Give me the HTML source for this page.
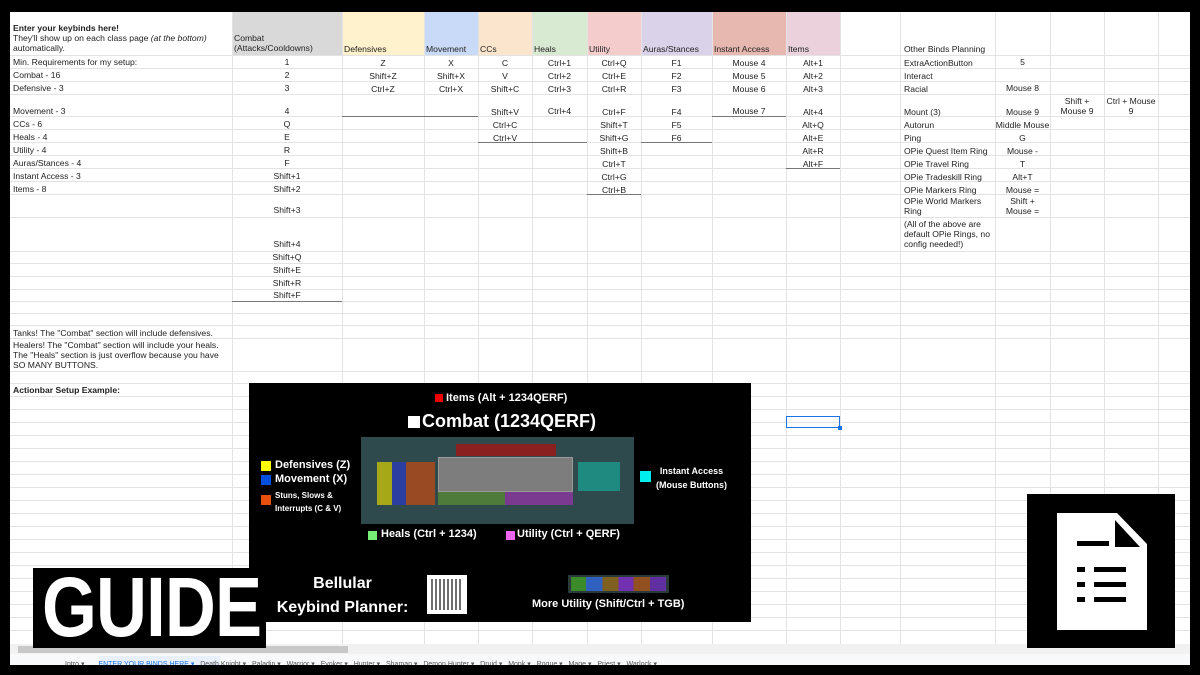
<!DOCTYPE html>
<html><head><meta charset="utf-8">
<style>
*{margin:0;padding:0;box-sizing:border-box}
body{width:1200px;height:675px;background:#000;position:relative;overflow:hidden;font-family:"Liberation Sans",sans-serif;font-size:8.6px;color:#222}
#sheet{position:absolute;left:10px;top:12px;width:1180px;height:653px;background:#fff;overflow:hidden}
.a{position:absolute;white-space:nowrap;line-height:10px}
.c{text-align:center}
.h{position:absolute;left:0;width:1180px;height:1px;background:#e3e3e3}
.v{position:absolute;top:0;width:1px;height:640px;background:#e3e3e3}
.f{position:absolute}
.b{position:absolute;height:1px;background:#777}
.bk{position:absolute;background:#000}
.w{color:#fff;font-weight:bold;position:absolute;white-space:nowrap}
.sq{position:absolute}
</style></head><body>
<div id="sheet">
<div class="f" style="left:222px;top:0;width:110px;height:43px;background:#d9d9d9"></div>
<div class="f" style="left:332px;top:0;width:82px;height:43px;background:#fff2cc"></div>
<div class="f" style="left:414px;top:0;width:54px;height:43px;background:#c9daf8"></div>
<div class="f" style="left:468px;top:0;width:54px;height:43px;background:#fce5cd"></div>
<div class="f" style="left:522px;top:0;width:55px;height:43px;background:#d9ead3"></div>
<div class="f" style="left:577px;top:0;width:54px;height:43px;background:#f4cccc"></div>
<div class="f" style="left:631px;top:0;width:71px;height:43px;background:#d9d2e9"></div>
<div class="f" style="left:702px;top:0;width:74px;height:43px;background:#e6b8af"></div>
<div class="f" style="left:776px;top:0;width:54px;height:43px;background:#ead1dc"></div>
<div class="v" style="left:222px"></div><div class="v" style="left:332px"></div><div class="v" style="left:414px"></div><div class="v" style="left:468px"></div><div class="v" style="left:522px"></div><div class="v" style="left:577px"></div><div class="v" style="left:631px"></div><div class="v" style="left:702px"></div><div class="v" style="left:776px"></div><div class="v" style="left:830px"></div><div class="v" style="left:890px"></div><div class="v" style="left:985px"></div><div class="v" style="left:1040px"></div><div class="v" style="left:1094px"></div><div class="v" style="left:1148px"></div>
<div class="h" style="top:43px"></div><div class="h" style="top:56px"></div><div class="h" style="top:69px"></div><div class="h" style="top:82px"></div><div class="h" style="top:104px"></div><div class="h" style="top:117px"></div><div class="h" style="top:130px"></div><div class="h" style="top:143px"></div><div class="h" style="top:156px"></div><div class="h" style="top:169px"></div><div class="h" style="top:182px"></div><div class="h" style="top:205px"></div><div class="h" style="top:239px"></div><div class="h" style="top:251px"></div><div class="h" style="top:264px"></div><div class="h" style="top:277px"></div><div class="h" style="top:289px"></div><div class="h" style="top:301px"></div><div class="h" style="top:313px"></div><div class="h" style="top:326px"></div><div class="h" style="top:359px"></div><div class="h" style="top:371px"></div><div class="h" style="top:384px"></div><div class="h" style="top:397px"></div><div class="h" style="top:410px"></div><div class="h" style="top:423px"></div><div class="h" style="top:436px"></div><div class="h" style="top:449px"></div><div class="h" style="top:462px"></div><div class="h" style="top:475px"></div><div class="h" style="top:488px"></div><div class="h" style="top:501px"></div><div class="h" style="top:514px"></div><div class="h" style="top:527px"></div><div class="h" style="top:540px"></div><div class="h" style="top:553px"></div><div class="h" style="top:566px"></div><div class="h" style="top:579px"></div><div class="h" style="top:592px"></div><div class="h" style="top:605px"></div><div class="h" style="top:618px"></div>
<div class="b" style="left:332px;top:104px;width:136px"></div>
<div class="b" style="left:468px;top:130px;width:109px"></div>
<div class="b" style="left:702px;top:104px;width:74px"></div>
<div class="b" style="left:631px;top:130px;width:71px"></div>
<div class="b" style="left:776px;top:156px;width:54px"></div>
<div class="b" style="left:577px;top:182px;width:54px"></div>
<div class="b" style="left:222px;top:289px;width:110px"></div>
<div class="f" style="left:776px;top:404px;width:54px;height:12px;border:1px solid #1a73e8"></div>
<div class="f" style="left:828px;top:414px;width:4px;height:4px;background:#1a73e8"></div>

<div class="a" style="left:3px;top:11px"><b>Enter your keybinds here!</b><br>They'll show up on each class page <i>(at the bottom)</i><br>automatically.</div>
<div class="a" style="left:3px;top:45px">Min. Requirements for my setup:</div>
<div class="a" style="left:3px;top:58px">Combat - 16</div>
<div class="a" style="left:3px;top:71px">Defensive - 3</div>
<div class="a" style="left:3px;top:94px">Movement - 3</div>
<div class="a" style="left:3px;top:107px">CCs - 6</div>
<div class="a" style="left:3px;top:120px">Heals - 4</div>
<div class="a" style="left:3px;top:133px">Utility - 4</div>
<div class="a" style="left:3px;top:146px">Auras/Stances - 4</div>
<div class="a" style="left:3px;top:159px">Instant Access - 3</div>
<div class="a" style="left:3px;top:172px">Items - 8</div>
<div class="a" style="left:3px;top:316px">Tanks! The "Combat" section will include defensives.</div>
<div class="a" style="left:3px;top:328px">Healers! The "Combat" section will include your heals.<br>The "Heals" section is just overflow because you have<br>SO MANY BUTTONS.</div>
<div class="a" style="left:3px;top:373px"><b>Actionbar Setup Example:</b></div>
<div class="a" style="left:224px;top:21px">Combat<br>(Attacks/Cooldowns)</div>
<div class="a" style="left:334px;top:32px">Defensives</div>
<div class="a" style="left:416px;top:32px">Movement</div>
<div class="a" style="left:470px;top:32px">CCs</div>
<div class="a" style="left:524px;top:32px">Heals</div>
<div class="a" style="left:579px;top:32px">Utility</div>
<div class="a" style="left:633px;top:32px">Auras/Stances</div>
<div class="a" style="left:704px;top:32px">Instant Access</div>
<div class="a" style="left:778px;top:32px">Items</div>
<div class="a c" style="left:222px;width:110px;top:45px">1</div>
<div class="a c" style="left:222px;width:110px;top:58px">2</div>
<div class="a c" style="left:222px;width:110px;top:71px">3</div>
<div class="a c" style="left:222px;width:110px;top:94px">4</div>
<div class="a c" style="left:222px;width:110px;top:107px">Q</div>
<div class="a c" style="left:222px;width:110px;top:120px">E</div>
<div class="a c" style="left:222px;width:110px;top:133px">R</div>
<div class="a c" style="left:222px;width:110px;top:146px">F</div>
<div class="a c" style="left:222px;width:110px;top:159px">Shift+1</div>
<div class="a c" style="left:222px;width:110px;top:172px">Shift+2</div>
<div class="a c" style="left:222px;width:110px;top:193px">Shift+3</div>
<div class="a c" style="left:222px;width:110px;top:227px">Shift+4</div>
<div class="a c" style="left:222px;width:110px;top:240px">Shift+Q</div>
<div class="a c" style="left:222px;width:110px;top:253px">Shift+E</div>
<div class="a c" style="left:222px;width:110px;top:266px">Shift+R</div>
<div class="a c" style="left:222px;width:110px;top:278px">Shift+F</div>
<div class="a c" style="left:332px;width:82px;top:45px;line-height:13px">Z<br>Shift+Z<br>Ctrl+Z</div>
<div class="a c" style="left:414px;width:54px;top:45px;line-height:13px">X<br>Shift+X<br>Ctrl+X</div>
<div class="a c" style="left:468px;width:54px;top:45px;line-height:13px">C<br>V<br>Shift+C</div>
<div class="a c" style="left:468px;width:54px;top:94px;line-height:13px">Shift+V<br>Ctrl+C<br>Ctrl+V</div>
<div class="a c" style="left:522px;width:55px;top:45px;line-height:13px">Ctrl+1<br>Ctrl+2<br>Ctrl+3</div>
<div class="a c" style="left:522px;width:55px;top:94px">Ctrl+4</div>
<div class="a c" style="left:577px;width:54px;top:45px;line-height:13px">Ctrl+Q<br>Ctrl+E<br>Ctrl+R</div>
<div class="a c" style="left:577px;width:54px;top:94px;line-height:13px">Ctrl+F<br>Shift+T<br>Shift+G<br>Shift+B<br>Ctrl+T<br>Ctrl+G<br>Ctrl+B</div>
<div class="a c" style="left:631px;width:71px;top:45px;line-height:13px">F1<br>F2<br>F3</div>
<div class="a c" style="left:631px;width:71px;top:94px;line-height:13px">F4<br>F5<br>F6</div>
<div class="a c" style="left:702px;width:74px;top:45px;line-height:13px">Mouse 4<br>Mouse 5<br>Mouse 6</div>
<div class="a c" style="left:702px;width:74px;top:94px">Mouse 7</div>
<div class="a c" style="left:776px;width:54px;top:45px;line-height:13px">Alt+1<br>Alt+2<br>Alt+3</div>
<div class="a c" style="left:776px;width:54px;top:94px;line-height:13px">Alt+4<br>Alt+Q<br>Alt+E<br>Alt+R<br>Alt+F</div>
<div class="a" style="left:894px;top:32px">Other Binds Planning</div>
<div class="a" style="left:894px;top:45px;line-height:13px">ExtraActionButton<br>Interact<br>Racial</div>
<div class="a" style="left:894px;top:94px;line-height:13px">Mount (3)<br>Autorun<br>Ping<br>OPie Quest Item Ring<br>OPie Travel Ring<br>OPie Tradeskill Ring<br>OPie Markers Ring</div>
<div class="a" style="left:894px;top:184px">OPie World Markers<br>Ring</div>
<div class="a" style="left:894px;top:207px">(All of the above are<br>default OPie Rings, no<br>config needed!)</div>
<div class="a c" style="left:985px;width:55px;top:45px">5</div>
<div class="a c" style="left:985px;width:55px;top:71px">Mouse 8</div>
<div class="a c" style="left:985px;width:55px;top:94px;line-height:13px">Mouse 9<br>Middle Mouse<br>G<br>Mouse -<br>T<br>Alt+T<br>Mouse =</div>
<div class="a c" style="left:985px;width:55px;top:184px">Shift +<br>Mouse =</div>
<div class="a c" style="left:1040px;width:54px;top:84px">Shift +<br>Mouse 9</div>
<div class="a c" style="left:1094px;width:54px;top:84px">Ctrl + Mouse<br>9</div>
<div class="f" style="left:0;top:632px;width:1180px;height:10px;background:#f1f1f1"></div>
<div class="f" style="left:8px;top:634px;width:330px;height:7px;background:#c8c8c8"></div>
<div class="f" style="left:0;top:642px;width:1180px;height:11px;background:#f8f9fa"></div>
<div class="f" style="left:90px;top:644px;width:120px;height:9px;background:#e8f0fe"></div>
<div class="a" style="left:55px;top:648px;font-size:7px;color:#555">Intro ▾ <span style="color:#1a73e8;margin-left:12px">ENTER YOUR BINDS HERE ▾</span> &nbsp; Death Knight ▾ &nbsp; Paladin ▾ &nbsp; Warrior ▾ &nbsp; Evoker ▾ &nbsp; Hunter ▾ &nbsp; Shaman ▾ &nbsp; Demon Hunter ▾ &nbsp; Druid ▾ &nbsp; Monk ▾ &nbsp; Rogue ▾ &nbsp; Mage ▾ &nbsp; Priest ▾ &nbsp; Warlock ▾</div>
</div>

<div class="bk" style="left:249px;top:383px;width:502px;height:239px"></div>
<div class="sq" style="left:435px;top:394px;width:8px;height:8px;background:#e00"></div>
<div class="w" style="left:446px;top:392px;font-size:11px">Items (Alt + 1234QERF)</div>
<div class="sq" style="left:408px;top:416px;width:12px;height:12px;background:#fff"></div>
<div class="w" style="left:422px;top:411px;font-size:18px">Combat (1234QERF)</div>
<div class="sq" style="left:361px;top:437px;width:273px;height:87px;background:#2f4a4c"></div>
<div class="sq" style="left:456px;top:444px;width:100px;height:12px;background:#8a2020"></div>
<div class="sq" style="left:438px;top:457px;width:135px;height:35px;background:#7d7d7d;border:1px solid #999"></div>
<div class="sq" style="left:377px;top:462px;width:15px;height:43px;background:#a6a818"></div>
<div class="sq" style="left:392px;top:462px;width:14px;height:43px;background:#2c3fa0"></div>
<div class="sq" style="left:406px;top:462px;width:29px;height:43px;background:#9a4a22"></div>
<div class="sq" style="left:438px;top:492px;width:67px;height:13px;background:#4e7a3a"></div>
<div class="sq" style="left:505px;top:492px;width:68px;height:13px;background:#7a3a90"></div>
<div class="sq" style="left:578px;top:462px;width:42px;height:29px;background:#1e8a80"></div>
<div class="sq" style="left:261px;top:461px;width:10px;height:10px;background:#ff0"></div>
<div class="w" style="left:275px;top:459px;font-size:11px">Defensives (Z)</div>
<div class="sq" style="left:261px;top:475px;width:10px;height:10px;background:#0050e0"></div>
<div class="w" style="left:275px;top:473px;font-size:11px">Movement (X)</div>
<div class="sq" style="left:261px;top:495px;width:10px;height:10px;background:#e85010"></div>
<div class="w" style="left:275px;top:489px;font-size:8px;line-height:13px">Stuns, Slows &amp;<br>Interrupts (C &amp; V)</div>
<div class="sq" style="left:640px;top:471px;width:11px;height:11px;background:#0ee"></div>
<div class="w" style="left:656px;top:464px;font-size:9px;line-height:14px;text-align:center">Instant Access<br>(Mouse Buttons)</div>
<div class="sq" style="left:368px;top:531px;width:9px;height:9px;background:#7e7"></div>
<div class="w" style="left:381px;top:528px;font-size:11px">Heals (Ctrl + 1234)</div>
<div class="sq" style="left:506px;top:531px;width:9px;height:9px;background:#e6e"></div>
<div class="w" style="left:517px;top:528px;font-size:11px">Utility (Ctrl + QERF)</div>
<div class="w" style="left:265px;top:572px;width:155px;text-align:center;font-size:16px;line-height:24px">Bellular<br>Keybind Planner:</div>
<div class="sq" style="left:427px;top:575px;width:40px;height:39px;background:#fff"></div>
<div class="sq" style="left:431px;top:579px;width:32px;height:31px;background:repeating-linear-gradient(90deg,#333 0 2px,#fff 2px 4px),#888;opacity:.7"></div>
<div class="sq" style="left:568px;top:575px;width:101px;height:18px;background:#2a3a3a"></div>
<div class="sq" style="left:571px;top:577px;width:95px;height:14px;background:linear-gradient(90deg,#3a8a2a 0 16%,#3060c0 16% 33%,#806020 33% 50%,#7030b0 50% 66%,#905020 66% 83%,#6030a0 83%)"></div>
<div class="w" style="left:532px;top:598px;font-size:11px">More Utility (Shift/Ctrl + TGB)</div>

<div class="bk" style="left:33px;top:568px;width:233px;height:80px"></div>
<div class="w" style="left:42px;top:562px;font-size:84px;line-height:90px;transform:scaleX(.84);transform-origin:left;letter-spacing:-1px">GUIDE</div>

<div class="bk" style="left:1027px;top:494px;width:148px;height:154px"></div>
<svg style="position:absolute;left:1027px;top:494px" width="148" height="154">
<path d="M30 19 H90 L120 50 V136 H30 Z" fill="#fff"/>
<path d="M88 26 V53 H113 Z" fill="#000"/>
<rect x="50" y="47" width="32" height="5" fill="#000"/>
<rect x="50" y="73" width="8" height="5" fill="#000"/><rect x="67" y="73" width="32" height="5" fill="#000"/>
<rect x="50" y="88" width="8" height="5" fill="#000"/><rect x="67" y="88" width="32" height="5" fill="#000"/>
<rect x="50" y="103" width="8" height="5" fill="#000"/><rect x="67" y="103" width="32" height="5" fill="#000"/>
</svg>
</body></html>
